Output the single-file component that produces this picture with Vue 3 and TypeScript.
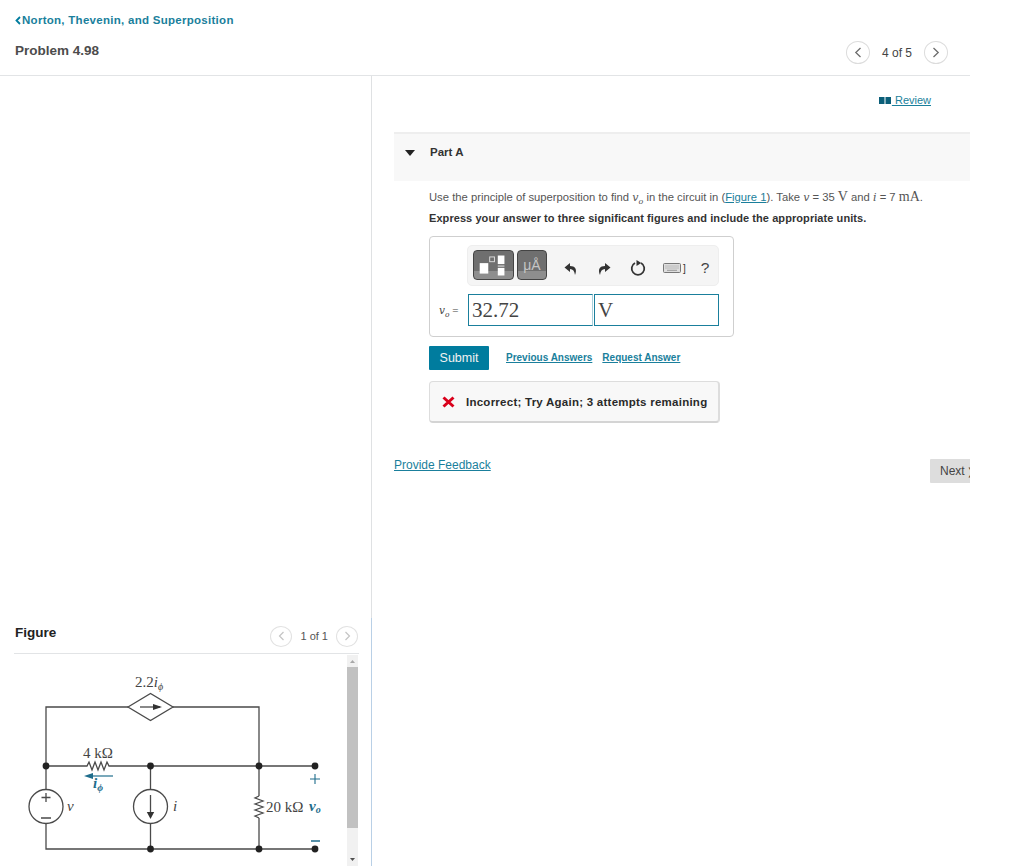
<script setup lang="ts">
const titleSmall = 'Norton, Thevenin, and Superposition'
const answer = { value: '32.72', unit: 'V' }
const attempts = 3
</script>

<template>
  <div class="page">
    <header class="top">
      <a class="crumb">
        <svg class="crumb-chev" width="6" height="9" viewBox="0 0 6 9"><path d="M5 1 L1.5 4.5 L5 8" fill="none" stroke="#007c9e" stroke-width="1.8" /></svg>
        {{ titleSmall }}
      </a>
      <div class="top-row">
        <h1 class="problem">Problem 4.98</h1>
        <div class="pager">
          <button class="round">
            <svg width="8" height="11" viewBox="0 0 8 11"><path d="M6.5 1 L1.8 5.5 L6.5 10" fill="none" stroke="#6d6d6d" stroke-width="1.3" /></svg>
          </button>
          <span class="pager-text">4 of 5</span>
          <button class="round">
            <svg width="8" height="11" viewBox="0 0 8 11"><path d="M1.5 1 L6.2 5.5 L1.5 10" fill="none" stroke="#6d6d6d" stroke-width="1.3" /></svg>
          </button>
        </div>
      </div>
    </header>

    <div class="cols">
      <aside class="left">
        <div class="left-space"></div>
        <section class="figure-panel">
          <div class="figure-head">
            <span class="figure-title">Figure</span>
            <div class="figure-pager">
              <button class="round round-small">
                <svg width="7" height="10" viewBox="0 0 7 10"><path d="M5.5 1 L1.5 5 L5.5 9" fill="none" stroke="#c4c4c4" stroke-width="1.2" /></svg>
              </button>
              <span class="figure-count">1 of 1</span>
              <button class="round round-small">
                <svg width="7" height="10" viewBox="0 0 7 10"><path d="M1.5 1 L5.5 5 L1.5 9" fill="none" stroke="#c4c4c4" stroke-width="1.2" /></svg>
              </button>
            </div>
          </div>
          <div class="figure-body">
            <svg class="circuit" width="333" height="211" viewBox="14 655 333 211">
              <g fill="none" stroke="#4a4a4a" stroke-width="1.3">
                <path d="M128 707 H46 V789" />
                <path d="M173 707 H259 V796" />
                <path d="M259 818 V849" />
                <path d="M46 766 H87 L89 762 L92 770 L95 762 L98 770 L101 762 L104 770 L107 762 L109 766 H315" />
                <path d="M46 824 V849 H315" />
                <path d="M150.500 766 V789" />
                <path d="M150.500 824 V849" />
                <path d="M259 796 L255 798 L263 801 L255 804 L263 807 L255 810 L263 813 L255 816 L259 818" />
                <path d="M128 707 L150.500 693.500 L173 707 L150.500 720.500 Z" />
                <circle cx="46" cy="806.500" r="17" />
                <circle cx="150.500" cy="806.500" r="17" />
                <path d="M46 793 V802 M41.500 797.500 H50.500 M41 818 H51" />
                <path d="M150.500 795 V816" />
                <path d="M140 707 H160" />
              </g>
              <path d="M146.800 812 L154.200 812 L150.500 819 Z" fill="#333" />
              <path d="M153 704 L162 707 L153 710 Z" fill="#333" />
              <g fill="#222">
                <circle cx="46" cy="766" r="3.400" />
                <circle cx="150.500" cy="766" r="3.400" />
                <circle cx="259" cy="766" r="3.400" />
                <circle cx="315" cy="766" r="3.400" />
                <circle cx="150.500" cy="849" r="3.400" />
                <circle cx="259" cy="849" r="3.400" />
                <circle cx="315" cy="849" r="3.400" />
              </g>
              <path d="M113 776 H92" stroke="#1f6d8c" stroke-width="1.2" fill="none" />
              <path d="M93 773 L84 776 L93 779 Z" fill="#1f6d8c" />
              <path d="M315 774 V784 M310 779 H320" stroke="#1f6d8c" stroke-width="1.1" fill="none" />
              <path d="M311 841 H320" stroke="#1f6d8c" stroke-width="1.5" fill="none" />
              <text class="ct" x="135" y="687">2.2<tspan font-style="italic">i</tspan><tspan class="phi" dy="3" font-style="italic">ϕ</tspan></text>
              <text class="ct" x="83" y="758">4 kΩ</text>
              <text class="ct ct-blue" x="93" y="788" font-style="italic" font-weight="700">i<tspan class="phi" dy="3">ϕ</tspan></text>
              <text class="ct" x="67" y="811" font-style="italic">v</text>
              <text class="ct" x="173" y="811" font-style="italic">i</text>
              <text class="ct" x="266" y="812">20 kΩ</text>
              <text class="ct ct-blue" x="309" y="811" font-style="italic" font-weight="700">v<tspan class="phi" dy="2">o</tspan></text>
            </svg>
            <div class="scrollbar">
              <svg width="11" height="12" viewBox="0 0 11 12"><path d="M3 8 H8 L5.500 5 Z" fill="#a8a8a8" /></svg>
              <div class="thumb"></div>
              <svg class="scroll-down" width="11" height="12" viewBox="0 0 11 12"><path d="M3 4 H8 L5.500 7 Z" fill="#505050" /></svg>
            </div>
          </div>
        </section>
      </aside>

      <main class="right">
        <a class="review">
          <svg width="12" height="7" viewBox="0 0 12 7"><path d="M0 0 H5.500 V7 H0 Z M6.500 0 H12 V7 H6.500 Z" fill="#0b5f79" /></svg>
          <span>&nbsp;Review</span>
        </a>

        <div class="part-head">
          <svg class="tri" width="10" height="6" viewBox="0 0 10 6"><path d="M0 0 H10 L5 6 Z" fill="#222" /></svg>
          <span class="part-name">Part A</span>
        </div>

        <div class="part-body">
          <p class="question">
            Use the principle of superposition to find <i class="math">v<sub>o</sub></i> in the circuit in (<a class="link">Figure 1</a>). Take <i class="math">v</i> = 35 <span class="unit">V</span> and <i class="math">i</i> = 7 <span class="unit">mA</span>.
          </p>
          <p class="instr">Express your answer to three significant figures and include the appropriate units.</p>

          <div class="answer-box">
            <div class="toolbar">
              <button class="tool tool-wide">
                <svg width="41" height="29" viewBox="0 0 41 29">
                  <rect x="6" y="12" width="9" height="11" fill="#fff" />
                  <rect x="16.500" y="5.500" width="5" height="5" fill="none" stroke="#ddd" stroke-width="1" />
                  <rect x="25" y="4" width="7" height="9" fill="#fff" />
                  <rect x="25" y="14.500" width="7" height="1.200" fill="#ddd" />
                  <rect x="25" y="17" width="7" height="8" fill="#fff" />
                </svg>
              </button>
              <button class="tool tool-units">μÅ</button>
              <div class="tool-icons">
                <svg width="14" height="15" viewBox="0 0 14 15"><path d="M6 2 L0.500 6.500 L6 11 V8 C9 8 10.500 10 11 14 C13.500 8 11 5 6 5 Z" fill="#333" /></svg>
                <svg width="14" height="15" viewBox="0 0 14 15"><path d="M8 2 L13.500 6.500 L8 11 V8 C5 8 3.500 10 3 14 C0.500 8 3 5 8 5 Z" fill="#333" /></svg>
                <svg width="16" height="16" viewBox="0 0 16 16"><path d="M11 3 A6.300 6.300 0 1 1 5 3" fill="none" stroke="#333" stroke-width="1.800" /><path d="M6.500 0 L11.300 3 L6.500 6 Z" fill="#333" /></svg>
                <span class="kbd-wrap">
                  <svg width="18" height="10" viewBox="0 0 18 10">
                    <rect x="0.500" y="0.500" width="17" height="9" rx="1" fill="#ddd" stroke="#777" />
                    <path d="M2.500 3 H15.500 M2.500 5 H15.500" stroke="#999" stroke-width="1" stroke-dasharray="1 1" />
                    <path d="M4 7.300 H14" stroke="#999" stroke-width="1" />
                  </svg>
                  <span class="kbd-bracket">]</span>
                </span>
                <span class="help">?</span>
              </div>
            </div>
            <div class="answer-row">
              <span class="answer-label"><i class="label-v">v<sub>o</sub></i> =</span>
              <div class="answer-input input-value">{{ answer.value }}</div>
              <div class="answer-input input-unit">{{ answer.unit }}</div>
            </div>
          </div>

          <div class="actions">
            <button class="submit">Submit</button>
            <a class="link action-link">Previous Answers</a>
            <a class="link action-link">Request Answer</a>
          </div>

          <div class="feedback">
            <svg width="13" height="12" viewBox="0 0 13 12"><path d="M1.500 1.500 L11.500 10.500 M11.500 1.500 L1.500 10.500" stroke="#d9001b" stroke-width="3" /></svg>
            <span>Incorrect; Try Again; {{ attempts }} attempts remaining</span>
          </div>
        </div>

        <div class="bottom-row">
          <a class="link provide">Provide Feedback</a>
          <button class="next">Next <span class="next-chev">❯</span></button>
        </div>
      </main>
    </div>
  </div>
</template>

<style scoped>
.page {
  width: 970px;
  height: 866px;
  overflow: hidden;
  background: #fff;
  font-family: "Liberation Sans", Arial, sans-serif;
  color: #333;
  display: flex;
  flex-direction: column;
}

.top {
  height: 76px;
  box-sizing: border-box;
  padding: 13px 0 0 15px;
  border-bottom: 1px solid #e2e4e6;
}

.crumb {
  display: flex;
  align-items: center;
  gap: 1px;
  height: 14px;
  font-size: 11.500px;
  font-weight: 700;
  letter-spacing: 0.28px;
  color: #1a7f9c;
}

.top-row {
  display: flex;
  justify-content: space-between;
  align-items: center;
  margin-top: 12px;
  padding-right: 22px;
}

.problem {
  margin: 0 0 3px;
  font-size: 13.500px;
  font-weight: 700;
  color: #4c4c4c;
}

.pager {
  display: flex;
  align-items: center;
  gap: 12px;
  margin-top: 2px;
}

.pager-text {
  font-size: 12px;
  color: #444;
}

.round {
  width: 24px;
  height: 23px;
  padding: 0;
  background: #fff;
  border: 1.500px solid #dcdcdc;
  border-radius: 50%;
  display: flex;
  align-items: center;
  justify-content: center;
}

.cols {
  flex: 1;
  display: flex;
  min-height: 0;
}

.left {
  width: 372px;
  flex-shrink: 0;
  display: flex;
  flex-direction: column;
}

.left-space {
  flex: 1;
  border-right: 1px solid #dfe1e3;
}

.figure-panel {
  height: 248px;
  box-sizing: border-box;
  border-right: 1px solid #b9d0e6;
  padding-left: 14px;
  padding-right: 12px;
}

.figure-head {
  height: 36px;
  box-sizing: border-box;
  border-bottom: 1px solid #e2e4e6;
  display: flex;
  justify-content: space-between;
  align-items: center;
  padding-bottom: 8px;
  padding-top: 5px;
}

.figure-title {
  margin: 0 0 4px 1px;
  font-size: 13.500px;
  font-weight: 700;
  color: #222;
}

.figure-pager {
  display: flex;
  align-items: center;
  gap: 8px;
  margin: 4px 1px 0 0;
}

.figure-count {
  font-size: 11px;
  color: #555;
}

.round-small {
  width: 22px;
  height: 21px;
  border: 1px solid #e2e2e2;
}

.figure-body {
  display: flex;
  height: 211px;
  margin-top: 1px;
}

.circuit {
  display: block;
  flex-shrink: 0;
}

.ct {
  font-family: "Liberation Serif", "Times New Roman", serif;
  font-size: 15px;
  fill: #444;
}

.ct-blue {
  fill: #1f6d8c;
}

.phi {
  font-size: 10px;
}

.scrollbar {
  width: 11px;
  background: #f1f1f1;
  display: flex;
  flex-direction: column;
}

.thumb {
  height: 161px;
  background: #c1c1c1;
}

.scroll-down {
  margin-top: auto;
}

.right {
  flex: 1;
  min-width: 0;
  padding-left: 22px;
  display: flex;
  flex-direction: column;
}

.review {
  align-self: flex-end;
  margin-top: 18px;
  margin-right: 39px;
  display: flex;
  align-items: center;
  gap: 1px;
  font-size: 11px;
  color: #1a7f9c;
}

.review span {
  text-decoration: underline;
}

.part-head {
  margin-top: 26px;
  height: 49px;
  box-sizing: border-box;
  background: #f8f8f8;
  border-top: 2px solid #eeeeee;
  display: flex;
  align-items: flex-start;
  padding: 12px 0 0 11px;
}

.tri {
  margin-top: 4px;
}

.part-name {
  margin-left: 15px;
  font-size: 11.500px;
  font-weight: 700;
  color: #333;
}

.part-body {
  padding-left: 35px;
}

.question {
  margin: 8px 0 0;
  height: 15px;
  font-size: 11.250px;
  line-height: 15px;
  color: #555;
  white-space: nowrap;
}

.math {
  font-family: "DejaVu Serif", "Liberation Serif", serif;
  font-size: 11px;
}

.math sub {
  font-size: 8px;
  line-height: 0;
}

.unit {
  font-family: "Liberation Serif", serif;
  font-size: 14px;
}

.link {
  color: #1a7f9c;
  text-decoration: underline;
}

.instr {
  margin: 7px 0 0;
  font-size: 11px;
  line-height: 15px;
  font-weight: 700;
  letter-spacing: 0.07px;
  color: #333;
  white-space: nowrap;
}

.answer-box {
  margin-top: 10px;
  width: 305px;
  height: 101px;
  box-sizing: border-box;
  border: 1px solid #cfcfcf;
  border-radius: 4px;
  padding: 8px 14px 0 37px;
}

.toolbar {
  height: 41px;
  width: 252px;
  box-sizing: border-box;
  background: #f5f5f5;
  border: 1px solid #eeeeee;
  border-radius: 5px;
  display: flex;
  align-items: flex-start;
  padding: 4px 0 0 5px;
}

.tool {
  height: 30px;
  padding: 0;
  border: 1px solid #444;
  border-radius: 4px;
  background: linear-gradient(#6f6f6f 0 72%, #8e8e8e 72%);
  display: flex;
  align-items: center;
  justify-content: center;
}

.tool-wide {
  width: 41px;
}

.tool-units {
  width: 30px;
  margin-left: 3px;
  font-family: "Liberation Sans", Arial, sans-serif;
  font-size: 14px;
  color: #c4c4c4;
}

.tool-icons {
  display: flex;
  align-items: center;
  margin-left: 17px;
  margin-top: 6px;
  gap: 19px;
  height: 24px;
  color: #333;
}

.kbd-wrap {
  display: flex;
  align-items: center;
  gap: 2px;
  margin-left: -2px;
}

.kbd-bracket {
  font-size: 10px;
}

.help {
  margin-left: -4px;
  font-size: 15.500px;
  color: #444;
}

.answer-row {
  display: flex;
  align-items: center;
  margin-top: 8px;
  margin-left: -27px;
}

.answer-label {
  width: 29px;
  margin-left: -1px;
  font-family: "Liberation Serif", serif;
  font-size: 11px;
  white-space: nowrap;
  color: #444;
}

.label-v {
  font-family: "DejaVu Serif", "Liberation Serif", serif;
  font-size: 10.500px;
}

.answer-label sub {
  font-size: 7.500px;
  line-height: 0;
}

.answer-input {
  height: 32px;
  box-sizing: border-box;
  border: 1px solid #1a7f9c;
  font-family: "Liberation Serif", serif;
  font-size: 21px;
  line-height: 30px;
  padding-left: 3px;
  color: #444;
}

.input-value {
  width: 125px;
  border-right-color: #a9d0dc;
}

.input-unit {
  width: 125px;
  margin-left: 1px;
}

.actions {
  display: flex;
  align-items: center;
  margin-top: 9px;
}

.submit {
  width: 60px;
  height: 24px;
  padding: 0;
  background: #007c9e;
  border: none;
  border-radius: 1px;
  color: #f2f2f2;
  font-family: "Liberation Sans", Arial, sans-serif;
  font-size: 12.500px;
}

.action-link {
  margin-left: 10px;
  margin-bottom: 2px;
  font-size: 10px;
  font-weight: 700;
}

.actions .submit + .action-link {
  margin-left: 17px;
}

.feedback {
  margin-top: 11px;
  width: 291px;
  height: 42px;
  box-sizing: border-box;
  background: #f8f8f8;
  border: 1px solid #dddddd;
  border-bottom: 2px solid #d4d4d4;
  border-right: 2px solid #dddddd;
  border-radius: 4px;
  display: flex;
  align-items: center;
  gap: 11px;
  padding-left: 12px;
  font-size: 11.500px;
  font-weight: 700;
  letter-spacing: 0.25px;
  color: #2a2a2a;
  white-space: nowrap;
}

.bottom-row {
  display: flex;
  justify-content: space-between;
  margin-top: 36px;
}

.provide {
  font-size: 12px;
  margin-top: -1px;
}

.next {
  width: 60px;
  height: 24px;
  margin-right: -20px;
  padding: 0 0 0 10px;
  text-align: left;
  background: #dddddd;
  border: none;
  border-radius: 1px;
  font-family: "Liberation Sans", Arial, sans-serif;
  font-size: 12px;
  color: #444;
  white-space: nowrap;
}

.next-chev {
  margin-left: -1px;
  font-size: 10px;
}
</style>
